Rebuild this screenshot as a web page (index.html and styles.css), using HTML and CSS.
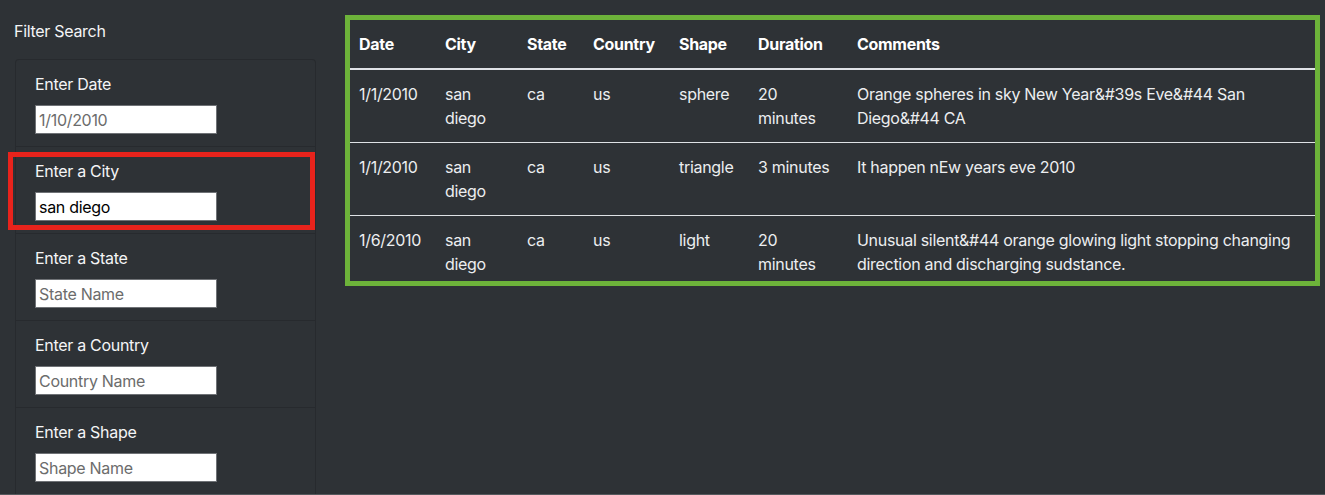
FILE: index.html
```html
<!DOCTYPE html>
<html lang="en">
<head>
<meta charset="utf-8">
<title>UFO Sightings</title>
<link rel="stylesheet" href="styles.css">
</head>
<body>
<div class="page">
  <aside class="sidebar">
    <div class="filter-title">Filter Search</div>
    <ul class="filters">
      <li class="filter-item">
        <label class="filter-label" for="datetime">Enter Date</label>
        <input class="filter-input" id="datetime" type="text" placeholder="1/10/2010">
      </li>
      <li class="filter-item is-highlighted">
        <label class="filter-label" for="city">Enter a City</label>
        <input class="filter-input" id="city" type="text" value="san diego">
      </li>
      <li class="filter-item">
        <label class="filter-label" for="state">Enter a State</label>
        <input class="filter-input" id="state" type="text" placeholder="State Name">
      </li>
      <li class="filter-item">
        <label class="filter-label" for="country">Enter a Country</label>
        <input class="filter-input" id="country" type="text" placeholder="Country Name">
      </li>
      <li class="filter-item">
        <label class="filter-label" for="shape">Enter a Shape</label>
        <input class="filter-input" id="shape" type="text" placeholder="Shape Name">
      </li>
    </ul>
  </aside>
  <main class="results">
    <div class="table-frame">
      <table class="ufo-table">
        <colgroup>
          <col class="c-date"><col class="c-city"><col class="c-state"><col class="c-country"><col class="c-shape"><col class="c-duration"><col class="c-comments">
        </colgroup>
        <thead>
          <tr><th>Date</th><th>City</th><th>State</th><th>Country</th><th>Shape</th><th>Duration</th><th>Comments</th></tr>
        </thead>
        <tbody>
          <tr><td>1/1/2010</td><td>san diego</td><td>ca</td><td>us</td><td>sphere</td><td class="duration">20 minutes</td><td>Orange spheres in sky New Year&amp;#39s Eve&amp;#44 San Diego&amp;#44 CA</td></tr>
          <tr><td>1/1/2010</td><td>san diego</td><td>ca</td><td>us</td><td>triangle</td><td class="duration">3 minutes</td><td>It happen nEw years eve 2010</td></tr>
          <tr><td>1/6/2010</td><td>san diego</td><td>ca</td><td>us</td><td>light</td><td class="duration">20 minutes</td><td>Unusual silent&amp;#44 orange glowing light stopping changing direction and discharging sudstance.</td></tr>
        </tbody>
      </table>
    </div>
  </main>
</div>
</body>
</html>
```

FILE: styles.css
```css
html, body {
  margin: 0;
  padding: 0;
  height: 100%;
}
body {
  background: #2e3236;
  color: #ffffff;
  font-family: Inter, "Noto Sans", "Liberation Sans", sans-serif;
  font-size: 16px;
  line-height: 24px;
  letter-spacing: -0.3px;
  overflow: hidden;
  box-sizing: border-box;
  border-bottom: 1px solid #55595d;
}
.page {
  display: grid;
  grid-template-columns: 302px 1fr;
  column-gap: 29px;
  padding: 15px 5px 0 14px;
  height: 100%;
  box-sizing: border-box;
}
.sidebar {
  display: flex;
  flex-direction: column;
}
.filter-title {
  margin-top: 4px;
  margin-bottom: 16px;
  font-size: 16px;
  line-height: 24px;
  color: #f4f5f6;
}
.filters {
  list-style: none;
  margin: 0 0 0 1px;
  padding: 0;
  border: 1px solid #272a2e;
  border-bottom: none;
  border-radius: 4px 4px 0 0;
  flex: 1;
}
.filter-item {
  position: relative;
  padding: 12px 20px 12px 19px;
  border-bottom: 1px solid #272a2e;
  display: flex;
  flex-direction: column;
  align-items: flex-start;
}
.filter-label {
  line-height: 24px;
  margin-bottom: 9px;
  color: #f4f5f6;
}
.filter-input {
  box-sizing: border-box;
  width: 182px;
  height: 29px;
  margin: 0;
  padding: 1px 3px;
  border: 1px solid #6f7276;
  background: #ffffff;
  color: #000000;
  font-family: Inter, "Noto Sans", "Liberation Sans", sans-serif;
  font-size: 16px;
  letter-spacing: -0.3px;
  outline: none;
}
.filter-input::placeholder {
  color: #6c6c6c;
}
.is-highlighted::after {
  content: "";
  position: absolute;
  left: -8px;
  top: 5px;
  width: 307px;
  height: 78px;
  box-sizing: border-box;
  border: 5px solid #e8231c;
  pointer-events: none;
}
.results {
  min-width: 0;
}
.table-frame {
  border: 5px solid #6db33a;
  height: 271px;
  box-sizing: border-box;
  overflow: hidden;
}
.ufo-table {
  width: 100%;
  table-layout: fixed;
  border-collapse: collapse;
  color: #eceef0;
}
.c-date { width: 86px; }
.c-city { width: 82px; }
.c-state { width: 66px; }
.c-country { width: 86px; }
.c-shape { width: 79px; }
.c-duration { width: 99px; }
.ufo-table th,
.ufo-table td {
  text-align: left;
  vertical-align: top;
  padding: 12px 9px 12px 9px;
  line-height: 24px;
}
.ufo-table td.duration {
  padding-right: 16px;
}
.ufo-table th {
  font-weight: 700;
  color: #ffffff;
  border-bottom: 2px solid #dfe2e6;
}
.ufo-table tbody tr + tr td {
  border-top: 1px solid #dfe2e6;
}
.ufo-table tbody tr:last-child td {
  padding-bottom: 5px;
}
```
